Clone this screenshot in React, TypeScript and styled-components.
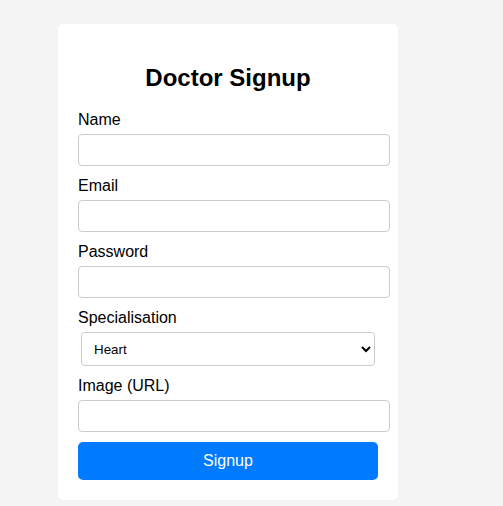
import React from "react";
import styled, { createGlobalStyle } from "styled-components";

const GlobalStyle = createGlobalStyle`
  html, body {
    margin: 0;
    padding: 0;
    background: #f4f4f4;
    font-family: "Liberation Sans", Arial, sans-serif;
  }
`;

const Page = styled.div`
  padding: 24px 0 0 58px;
  min-height: 506px;
  box-sizing: border-box;
`;

const Card = styled.form`
  width: 300px;
  padding: 20px;
  background: #ffffff;
  border-radius: 5px;
`;

const Title = styled.h2`
  font-size: 24px;
  font-weight: bold;
  text-align: center;
  margin: 20px 0 18px;
  color: #000;
`;

const Label = styled.label`
  display: block;
  font-size: 16px;
  line-height: 19px;
  color: #000;
  margin-bottom: 5px;
`;

const Input = styled.input`
  display: block;
  width: 100%;
  box-sizing: content-box;
  height: 20px;
  padding: 5px;
  border: 1px solid #ccc;
  border-radius: 4px;
  margin: 0 0 10px 0;
  font-family: inherit;
  font-size: 16px;
  outline: none;
`;

const Select = styled.select`
  display: block;
  width: 294px;
  height: 34px;
  margin: 0 0 10px 3px;
  padding: 8px;
  border: 1px solid #ccc;
  border-radius: 4px;
  background: #fff;
  font-family: "Liberation Sans", Arial, sans-serif;
  font-size: 13.33px;
  color: #000;
`;

const Button = styled.button`
  display: block;
  width: 300px;
  height: 38px;
  margin-top: 1px;
  border: none;
  border-radius: 5px;
  background: #007bff;
  color: #fff;
  font-family: inherit;
  font-size: 16px;
  cursor: pointer;
`;

const fields = [
  { id: "name", label: "Name", type: "text" },
  { id: "email", label: "Email", type: "email" },
  { id: "password", label: "Password", type: "password" },
];

export default function App() {
  return (
    <Page>
      <GlobalStyle />
      <Card onSubmit={(e) => e.preventDefault()}>
        <Title>Doctor Signup</Title>
        {fields.map((f) => (
          <React.Fragment key={f.id}>
            <Label htmlFor={f.id}>{f.label}</Label>
            <Input id={f.id} type={f.type} />
          </React.Fragment>
        ))}
        <Label htmlFor="spec">Specialisation</Label>
        <Select id="spec" defaultValue="Heart">
          <option>Heart</option>
          <option>Brain</option>
          <option>Bones</option>
          <option>Skin</option>
        </Select>
        <Label htmlFor="image">Image (URL)</Label>
        <Input id="image" type="text" />
        <Button type="submit">Signup</Button>
      </Card>
    </Page>
  );
}
